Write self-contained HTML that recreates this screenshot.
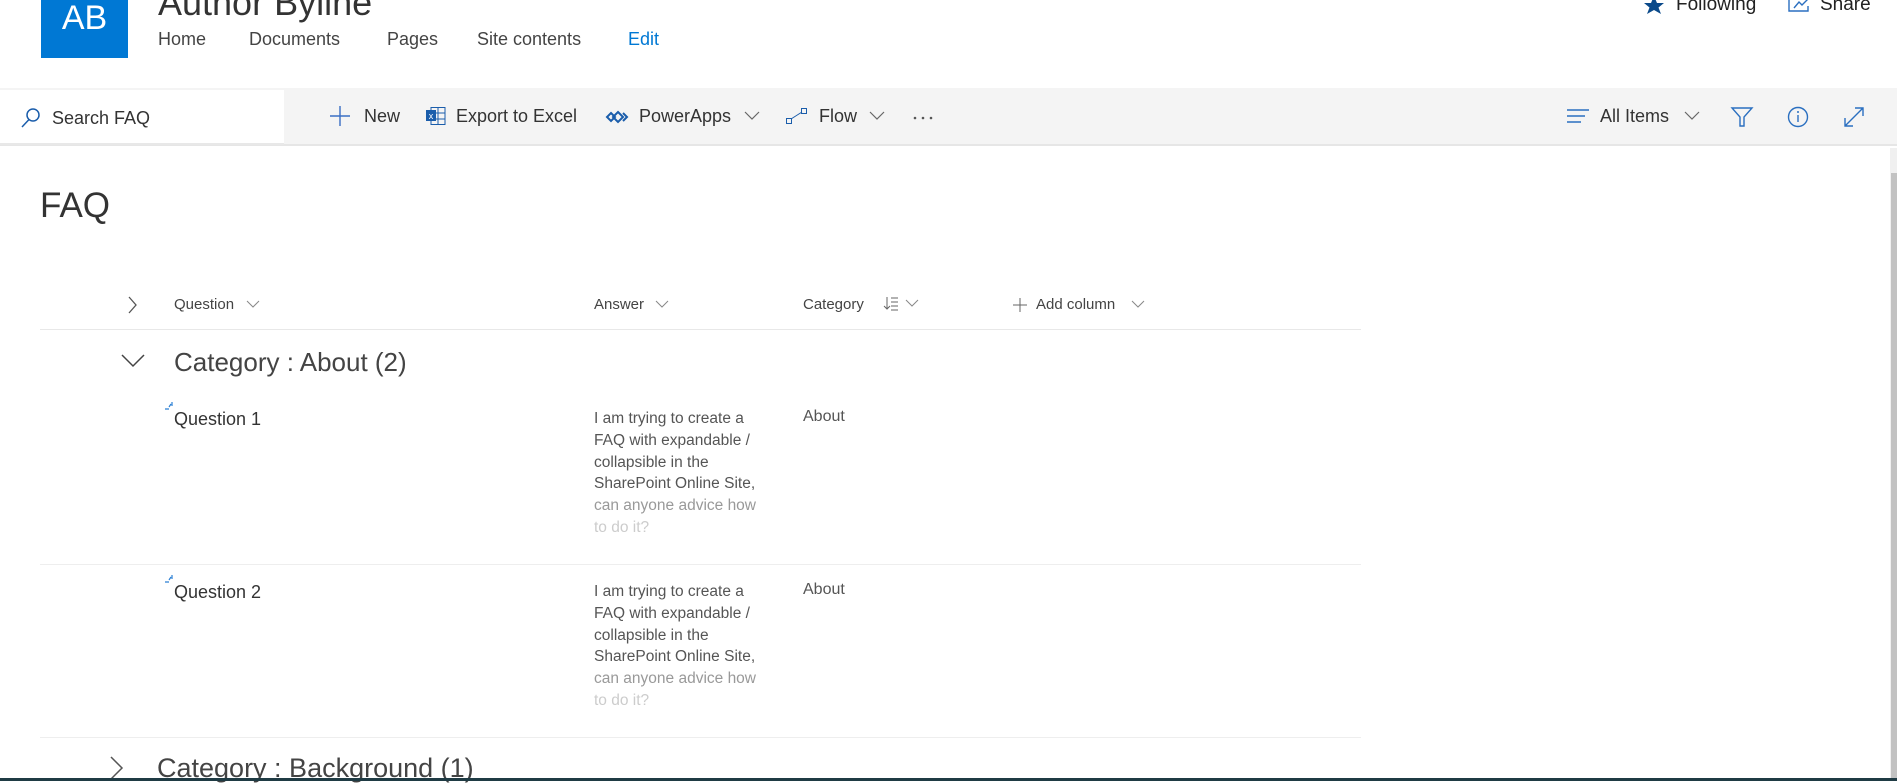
<!DOCTYPE html>
<html><head><meta charset="utf-8"><style>
*{margin:0;padding:0;box-sizing:border-box}
body{width:1897px;height:781px;overflow:hidden;background:#fff;font-family:"Liberation Sans",sans-serif;color:#333;position:relative}
.a{position:absolute;white-space:nowrap}
.nav{font-size:18px;color:#444;top:29px}
.cmd{font-size:18px;color:#333;top:106px}
.hd{font-size:15px;color:#444;top:296px}
.ans{font-size:15.5px;line-height:21.8px;color:#555}
svg{position:absolute;overflow:visible}
</style></head><body>
<div class="a" style="left:41px;top:0;width:87px;height:58px;background:#0078d4;color:#fff;font-size:34px;text-align:center;line-height:36px">AB</div>
<div class="a" style="left:158px;top:-18px;font-size:36px;color:#333;font-weight:300">Author Byline</div>
<div class="a nav" style="left:158px">Home</div>
<div class="a nav" style="left:249px">Documents</div>
<div class="a nav" style="left:387px">Pages</div>
<div class="a nav" style="left:477px">Site contents</div>
<div class="a nav" style="left:628px;color:#0078d4">Edit</div>
<svg style="left:1644px;top:-4px" width="20" height="18"><polygon points="10,0 13,7 20,7 14.5,11.5 17,18 10,14 3,18 5.5,11.5 0,7 7,7" fill="#0b4a8a"/></svg>
<div class="a" style="left:1676px;top:-6px;font-size:19px;color:#222">Following</div>
<svg style="left:1788px;top:-2px" width="22" height="14"><path d="M1 2v11h19V8M6 10l5-6 3 3 6-6" fill="none" stroke="#2a6fc0" stroke-width="1.4"/></svg>
<div class="a" style="left:1820px;top:-6px;font-size:19px;color:#222">Share</div>

<div class="a" style="left:0;top:88px;width:1897px;height:58px;background:#f4f4f4;border-bottom:2px solid #e6e6e6"></div>
<div class="a" style="left:0;top:90px;width:284px;height:55px;background:#fff;border-bottom:2px solid #e8e8e8"></div>
<svg style="left:20px;top:107px" width="22" height="22"><circle cx="13" cy="8" r="6" fill="none" stroke="#1a5dab" stroke-width="1.5"/><line x1="9" y1="12.5" x2="2" y2="20" stroke="#1a5dab" stroke-width="1.5"/></svg>
<div class="a" style="left:52px;top:108px;font-size:18px;color:#333">Search FAQ</div>
<svg style="left:330px;top:106px" width="20" height="20"><path d="M10 0v20M0 10h20" stroke="#3a6fc4" stroke-width="1.4"/></svg>
<div class="a cmd" style="left:364px">New</div>
<svg style="left:426px;top:107px" width="20" height="18"><rect x="5" y="0.5" width="14" height="17" fill="none" stroke="#1a5dab"/><path d="M5 6h14M5 12h14M12 0v18" stroke="#1a5dab"/><rect x="0" y="3" width="10" height="11" fill="#1a5dab"/><text x="5" y="12" font-size="9" fill="#fff" text-anchor="middle" font-family="Liberation Sans">x</text></svg>
<div class="a cmd" style="left:456px">Export to Excel</div>
<svg style="left:607px;top:111px" width="20" height="12"><path d="M4 2l4 4-4 4-4-4zM11 1l5 5-5 5-5-5z M16 2l4 4-4 4" fill="none" stroke="#1a5dab" stroke-width="2"/></svg>
<div class="a cmd" style="left:639px">PowerApps</div>
<svg style="left:744px;top:111px" width="16" height="10"><path d="M1 1l7 7 7-7" fill="none" stroke="#666" stroke-width="1.2"/></svg>
<svg style="left:786px;top:108px" width="22" height="16"><rect x="0.5" y="10.5" width="5" height="5" fill="none" stroke="#1a5dab"/><rect x="15.5" y="0.5" width="5" height="5" fill="none" stroke="#1a5dab"/><path d="M5 11l11-7" stroke="#1a5dab"/></svg>
<div class="a cmd" style="left:819px">Flow</div>
<svg style="left:869px;top:111px" width="16" height="10"><path d="M1 1l7 7 7-7" fill="none" stroke="#666" stroke-width="1.2"/></svg>
<svg style="left:913px;top:116px" width="24" height="4"><circle cx="2" cy="2" r="1.3" fill="#555"/><circle cx="10" cy="2" r="1.3" fill="#555"/><circle cx="18" cy="2" r="1.3" fill="#555"/></svg>

<svg style="left:1567px;top:108px" width="22" height="16"><path d="M0 2h22M0 8h18M0 14h14" stroke="#2a6fc0" stroke-width="1.4"/></svg>
<div class="a cmd" style="left:1600px">All Items</div>
<svg style="left:1684px;top:111px" width="16" height="10"><path d="M1 1l7 7 7-7" fill="none" stroke="#666" stroke-width="1.2"/></svg>
<svg style="left:1731px;top:107px" width="22" height="20"><path d="M1 1h20l-8 9v9h-4v-9z" fill="none" stroke="#2a6fc0" stroke-width="1.4"/></svg>
<svg style="left:1787px;top:106px" width="22" height="22"><circle cx="11" cy="11" r="9.5" fill="none" stroke="#2a6fc0" stroke-width="1.4"/><path d="M11 9v7" stroke="#2a6fc0" stroke-width="1.4"/><circle cx="11" cy="6" r="1" fill="#2a6fc0"/></svg>
<svg style="left:1844px;top:107px" width="20" height="20"><path d="M1 19L19 1M1 11v8h8M11 1h8v8" fill="none" stroke="#2a6fc0" stroke-width="1.4"/></svg>

<div class="a" style="left:1890px;top:148px;width:7px;height:630px;background:#f0f0f0"></div>
<div class="a" style="left:1891px;top:173px;width:6px;height:605px;background:#c2c2c2"></div>

<div class="a" style="left:40px;top:186px;font-size:35px;color:#333;font-weight:300">FAQ</div>

<svg style="left:128px;top:296px" width="10" height="18"><path d="M1 1l7 8-7 8" fill="none" stroke="#555" stroke-width="1.3"/></svg>
<div class="a hd" style="left:174px">Question</div>
<svg style="left:246px;top:300px" width="14" height="9"><path d="M1 1l6 6 6-6" fill="none" stroke="#888"/></svg>
<div class="a hd" style="left:594px">Answer</div>
<svg style="left:655px;top:300px" width="14" height="9"><path d="M1 1l6 6 6-6" fill="none" stroke="#888"/></svg>
<div class="a hd" style="left:803px">Category</div>
<svg style="left:884px;top:297px" width="36" height="14"><path d="M3 0v12M0 9l3 3 3-3M7 1h7M7 5h7M7 9h7M7 13h7" fill="none" stroke="#666"/><path d="M22 3l6 6 6-6" fill="none" stroke="#888"/></svg>
<svg style="left:1013px;top:298px" width="14" height="14"><path d="M7 0v14M0 7h14" stroke="#666"/></svg>
<div class="a hd" style="left:1036px">Add column</div>
<svg style="left:1131px;top:300px" width="14" height="9"><path d="M1 1l6 6 6-6" fill="none" stroke="#888"/></svg>
<div class="a" style="left:40px;top:329px;width:1321px;height:1px;background:#e8e8e8"></div>

<svg style="left:121px;top:354px" width="24" height="14"><path d="M1 1l11 11 11-11" fill="none" stroke="#444" stroke-width="1.5"/></svg>
<div class="a" style="left:174px;top:347px;font-size:26px;color:#444;font-weight:300">Category : About (2)</div>

<svg style="left:164px;top:402px" width="10" height="10"><path d="M1 7h4M5 5l2-3M8 4V0" stroke="#2a7fd4" stroke-width="1.2"/></svg>
<div class="a" style="left:174px;top:409px;font-size:18px;color:#333">Question 1</div>
<div class="a ans" style="left:594px;top:408px">I am trying to create a<br>FAQ with expandable /<br>collapsible in the<br>SharePoint Online Site,<br><span style="color:#999">can anyone advice how</span><br><span style="color:#ccc">to do it?</span></div>
<div class="a" style="left:803px;top:408px;font-size:16px;color:#555">About</div>
<div class="a" style="left:40px;top:564px;width:1321px;height:1px;background:#eee"></div>

<svg style="left:164px;top:575px" width="10" height="10"><path d="M1 7h4M5 5l2-3M8 4V0" stroke="#2a7fd4" stroke-width="1.2"/></svg>
<div class="a" style="left:174px;top:582px;font-size:18px;color:#333">Question 2</div>
<div class="a ans" style="left:594px;top:581px">I am trying to create a<br>FAQ with expandable /<br>collapsible in the<br>SharePoint Online Site,<br><span style="color:#999">can anyone advice how</span><br><span style="color:#ccc">to do it?</span></div>
<div class="a" style="left:803px;top:581px;font-size:16px;color:#555">About</div>
<div class="a" style="left:40px;top:737px;width:1321px;height:1px;background:#eee"></div>

<svg style="left:110px;top:756px" width="14" height="24"><path d="M1 1l11 11-11 11" fill="none" stroke="#555" stroke-width="1.5"/></svg>
<div class="a" style="left:157px;top:753px;font-size:27px;color:#444;font-weight:300">Category : Background (1)</div>
<div class="a" style="left:0;top:778px;width:1897px;height:3px;background:#1f3b44"></div>
</body></html>
